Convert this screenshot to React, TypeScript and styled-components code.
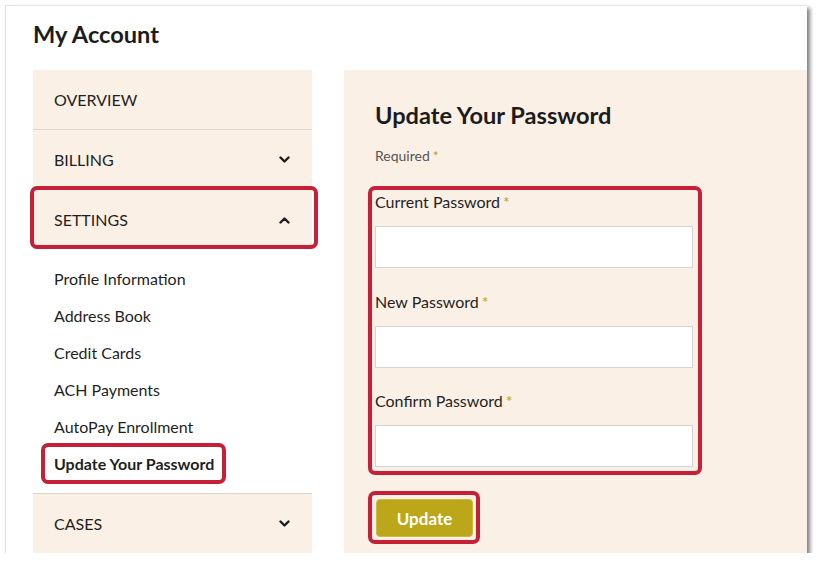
import React from 'react';
import styled, { createGlobalStyle } from 'styled-components';

// -- Global --

const GlobalStyle = createGlobalStyle`
  html, body {
    margin: 0;
    padding: 0;
    background: #ffffff;
  }
  body {
    font-family: Lato, "Open Sans", "Liberation Sans", sans-serif;
    color: #222222;
  }
  * {
    box-sizing: border-box;
  }
`;

// -- Styled Components --

const Frame = styled.div`
  margin: 5px 0 0 5px;
  width: 802px;
  height: 548px;
  background: #ffffff;
  border-top: 1px solid #e4e4e4;
  border-left: 1px solid #e4e4e4;
  box-shadow: 3px 3px 4px rgba(0, 0, 0, 0.5);
  overflow: hidden;
  padding-left: 27px;
`;

const PageTitle = styled.h1`
  margin: 0;
  padding-top: 13px;
  font-size: 23.6px;
  line-height: 30px;
  font-weight: 700;
  color: #1c1c1c;
`;

const Layout = styled.div`
  display: flex;
  gap: 32px;
  margin-top: 21px;
  align-items: flex-start;
`;

const Sidebar = styled.nav`
  width: 279px;
  flex-shrink: 0;
  display: flex;
  flex-direction: column;
`;

const NavRow = styled.div<{ $divider?: boolean }>`
  position: relative;
  height: ${p => (p.$divider ? 60 : 59)}px;
  padding: 0 22px 0 21px;
  display: flex;
  align-items: center;
  justify-content: space-between;
  background: #fbf0e6;
  font-size: 16px;
  text-transform: uppercase;
  color: #1f1f1f;
  border-bottom: ${p => (p.$divider ? '1px solid #d9d5d1' : 'none')};
`;

const SubMenu = styled.ul`
  list-style: none;
  margin: 0;
  padding: 11px 21px 11px;
  border-bottom: 1px solid #d9d5d1;
`;

const SubItem = styled.li<{ $active?: boolean }>`
  position: relative;
  display: block;
  width: fit-content;
  font-size: 16px;
  line-height: 37px;
  font-weight: ${p => (p.$active ? 700 : 400)};
  color: #1f1f1f;
`;

const Panel = styled.section`
  flex: 1;
  min-height: 490px;
  background: #fbf0e6;
  padding: 30px 31px;
`;

const PanelTitle = styled.h2`
  margin: 0;
  font-size: 23.6px;
  line-height: 30px;
  font-weight: 700;
  color: #1c1c1c;
`;

const RequiredNote = styled.p`
  margin: 16px 0 0;
  font-size: 14px;
  line-height: 20px;
  color: #555555;
`;

const Star = styled.span`
  color: #b9a21c;
  margin-left: 3px;
`;

const FieldGroup = styled.div`
  position: relative;
  width: 318px;
  margin-top: 24px;
  display: flex;
  flex-direction: column;
  gap: 21.5px;
`;

const Field = styled.label`
  display: flex;
  flex-direction: column;
  gap: 12px;
`;

const FieldLabel = styled.span`
  font-size: 16px;
  line-height: 24px;
  color: #1f1f1f;
`;

const Input = styled.input`
  width: 100%;
  height: 42px;
  margin: 0;
  border: 1px solid #d6d4d2;
  background: #ffffff;
  font: inherit;
  padding: 0 10px;
  outline: none;
`;

const ButtonWrap = styled.div`
  position: relative;
  width: fit-content;
  margin-top: 32px;
  margin-left: 1px;
`;

const SubmitButton = styled.button`
  display: block;
  width: 97px;
  height: 38px;
  border: 1px solid #cdb93a;
  border-radius: 4px;
  background: #bca619;
  color: #ffffff;
  font-family: inherit;
  font-size: 17px;
  font-weight: 700;
  cursor: pointer;
`;

// annotation rectangle drawn over the screenshot
const Callout = styled.span<{ $t: number; $r: number; $b: number; $l: number }>`
  position: absolute;
  top: ${p => p.$t}px;
  right: ${p => p.$r}px;
  bottom: ${p => p.$b}px;
  left: ${p => p.$l}px;
  border: 4px solid #c62038;
  border-radius: 7px;
  pointer-events: none;
`;

const Chevron: React.FC<{ up?: boolean }> = ({ up }) => (
  <svg width="11" height="8" viewBox="0 0 11 8" aria-hidden="true">
    <path
      d={up ? 'M1.5 6.5 L5.5 2.5 L9.5 6.5' : 'M1.5 1.5 L5.5 5.5 L9.5 1.5'}
      fill="none"
      stroke="#1c1c1c"
      strokeWidth="2.4"
      strokeLinecap="round"
      strokeLinejoin="round"
    />
  </svg>
);

// -- Component --

const settingsLinks = [
  'Profile Information',
  'Address Book',
  'Credit Cards',
  'ACH Payments',
  'AutoPay Enrollment',
  'Update Your Password',
];

const fields = ['Current Password', 'New Password', 'Confirm Password'];

const App: React.FC = () => {
  return (
    <>
      <GlobalStyle />
      <Frame>
        <PageTitle>My Account</PageTitle>
        <Layout>
          <Sidebar>
            <NavRow $divider>Overview</NavRow>
            <NavRow $divider>
              Billing
              <Chevron />
            </NavRow>
            <NavRow>
              Settings
              <Chevron up />
              <Callout $t={-4} $r={-6} $b={0} $l={-3} />
            </NavRow>
            <SubMenu>
              {settingsLinks.map(link => {
                const active = link === 'Update Your Password';
                return (
                  <SubItem key={link} $active={active}>
                    {link}
                    {active && <Callout $t={-2} $r={-12} $b={-2} $l={-13} />}
                  </SubItem>
                );
              })}
            </SubMenu>
            <NavRow>
              Cases
              <Chevron />
            </NavRow>
          </Sidebar>

          <Panel>
            <PanelTitle>Update Your Password</PanelTitle>
            <RequiredNote>
              Required<Star>*</Star>
            </RequiredNote>
            <FieldGroup>
              {fields.map(name => (
                <Field key={name}>
                  <FieldLabel>
                    {name}
                    <Star>*</Star>
                  </FieldLabel>
                  <Input type="password" />
                </Field>
              ))}
              <Callout $t={-4} $r={-9} $b={-8} $l={-7} />
            </FieldGroup>
            <ButtonWrap>
              <SubmitButton type="button">Update</SubmitButton>
              <Callout $t={-8} $r={-7} $b={-7} $l={-8} />
            </ButtonWrap>
          </Panel>
        </Layout>
      </Frame>
    </>
  );
};

export default App;
